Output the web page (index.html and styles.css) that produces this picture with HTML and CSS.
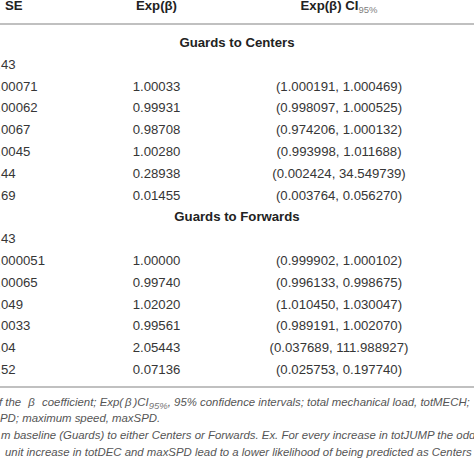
FILE: index.html
```html
<!DOCTYPE html>
<html>
<head>
<meta charset="utf-8">
<link rel="stylesheet" href="styles.css">
</head>
<body>
<div class="page">
  <div class="table">
    <div class="row head">
      <div class="c1 hl">SE</div>
      <div class="c2">Exp(β)</div>
      <div class="c3">Exp(β) CI<span class="sub">95%</span></div>
    </div>
    <div class="tbody">
      <div class="section">Guards to Centers</div>
      <div class="row"><div class="c1"><span class="ip">0.</span>43</div><div class="c2"></div><div class="c3"></div></div>
      <div class="row"><div class="c1"><span class="ip">0.</span>00071</div><div class="c2">1.00033</div><div class="c3">(1.000191, 1.000469)</div></div>
      <div class="row"><div class="c1"><span class="ip">0.</span>00062</div><div class="c2">0.99931</div><div class="c3">(0.998097, 1.000525)</div></div>
      <div class="row"><div class="c1"><span class="ip">0.</span>0067</div><div class="c2">0.98708</div><div class="c3">(0.974206, 1.000132)</div></div>
      <div class="row"><div class="c1"><span class="ip">0.</span>0045</div><div class="c2">1.00280</div><div class="c3">(0.993998, 1.011688)</div></div>
      <div class="row"><div class="c1"><span class="ip">0.</span>44</div><div class="c2">0.28938</div><div class="c3">(0.002424, 34.549739)</div></div>
      <div class="row"><div class="c1"><span class="ip">0.</span>69</div><div class="c2">0.01455</div><div class="c3">(0.003764, 0.056270)</div></div>
      <div class="section">Guards to Forwards</div>
      <div class="row"><div class="c1"><span class="ip">0.</span>43</div><div class="c2"></div><div class="c3"></div></div>
      <div class="row"><div class="c1"><span class="ip">0.</span>000051</div><div class="c2">1.00000</div><div class="c3">(0.999902, 1.000102)</div></div>
      <div class="row"><div class="c1"><span class="ip">0.</span>00065</div><div class="c2">0.99740</div><div class="c3">(0.996133, 0.998675)</div></div>
      <div class="row"><div class="c1"><span class="ip">0.</span>049</div><div class="c2">1.02020</div><div class="c3">(1.010450, 1.030047)</div></div>
      <div class="row"><div class="c1"><span class="ip">0.</span>0033</div><div class="c2">0.99561</div><div class="c3">(0.989191, 1.002070)</div></div>
      <div class="row"><div class="c1"><span class="ip">0.</span>04</div><div class="c2">2.05443</div><div class="c3">(0.037689, 111.988927)</div></div>
      <div class="row"><div class="c1"><span class="ip">0.</span>52</div><div class="c2">0.07136</div><div class="c3">(0.025753, 0.197740)</div></div>
    </div>
  </div>
  <div class="notes">
    <div class="line l1">f the <span class="beta">β</span> coefficient; Exp(<span class="beta2">β</span>)CI<span class="nsub">95%</span>, 95% confidence intervals; total mechanical load, totMECH;</div>
    <div class="line l2">PD; maximum speed, maxSPD.</div>
    <div class="line l3">m baseline (Guards) to either Centers or Forwards. Ex. For every increase in totJUMP the odds</div>
    <div class="line l4">unit increase in totDEC and maxSPD lead to a lower likelihood of being predicted as Centers</div>
  </div>
</div>
</body>
</html>
```
FILE: styles.css
```css
html, body {
  margin: 0;
  padding: 0;
  background: #ffffff;
}
.page {
  width: 474px;
  height: 474px;
  overflow: hidden;
  font-family: "Liberation Sans", Arial, sans-serif;
  color: #363636;
}
.table {
  font-size: 13.2px;
}
.row {
  display: grid;
  grid-template-columns: 80px 153px 212px;
  height: 21.8px;
  line-height: 21.8px;
  white-space: nowrap;
}
.c1 {
  text-align: left;
}
.c2, .c3 {
  text-align: center;
}
.ip {
  display: inline-block;
  width: 11px;
  margin-left: -10px;
  text-align: right;
}
.head {
  line-height: 12px;
  font-weight: bold;
  color: #222222;
  border-bottom: 2px solid #c0c0c0;
  box-sizing: border-box;
  height: 25px;
}
.head .hl {
  padding-left: 5px;
}
.sub {
  font-weight: normal;
  font-size: 9.5px;
  color: #808080;
  vertical-align: -3px;
  line-height: 0;
}
.tbody {
  padding-top: 7px;
  padding-bottom: 5px;
  border-bottom: 2px solid #c0c0c0;
}
.section {
  height: 21.8px;
  line-height: 21.8px;
  text-align: center;
  font-weight: bold;
  color: #222222;
}
.notes {
  padding-top: 6px;
  font-size: 11.4px;
  line-height: 16.6px;
  font-style: italic;
  color: #555555;
}
.line {
  white-space: nowrap;
}
.l1 {
  margin-left: -1px;
}
.l3 {
  margin-left: 1px;
}
.l4 {
  padding-left: 5px;
}
.beta {
  margin: 0 4px;
}
.beta2 {
  margin: 0 2px;
}
.nsub {
  font-size: 9.5px;
  color: #777777;
  vertical-align: -3px;
  line-height: 0;
}
```
